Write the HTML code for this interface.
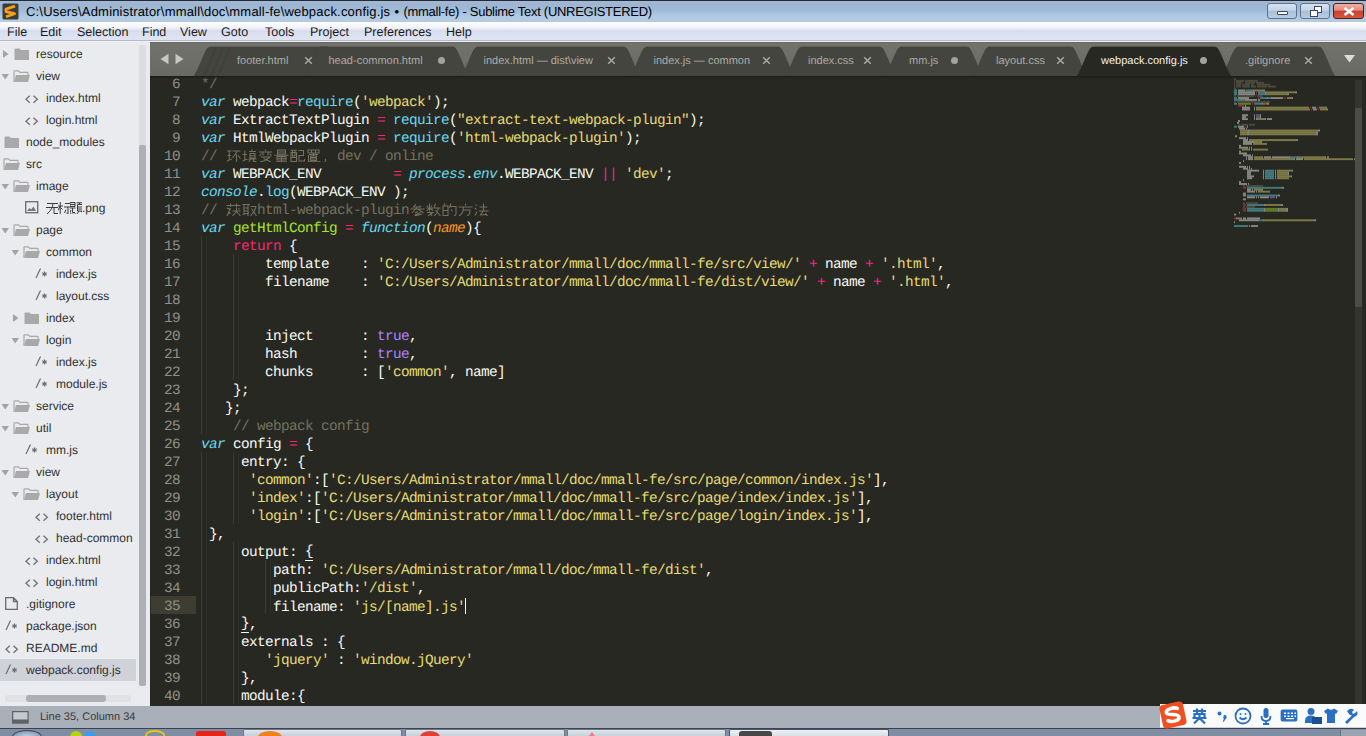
<!DOCTYPE html>
<html><head><meta charset="utf-8">
<style>
*{margin:0;padding:0;box-sizing:border-box}
html,body{width:1366px;height:736px;overflow:hidden;background:#272822;font-family:"Liberation Sans",sans-serif;text-rendering:geometricPrecision}
.abs{position:absolute}
#title{position:absolute;left:0;top:0;width:1366px;height:22px;background:linear-gradient(#a9b9d0 0px,#9db5d2 3px,#9fbad8 9px,#b0cbe7 16px,#b3cbe2 19px,#b9c8d6 21px);border-top:1px solid #1d2b3c}
#title .t{text-rendering:geometricPrecision;position:absolute;left:26px;top:3px;font-size:13px;color:#000;white-space:nowrap}
#menu{position:absolute;left:0;top:22px;width:1366px;height:20px;background:linear-gradient(#fdfdfe 0px,#f4f5fa 5px,#e9ebf5 7px,#d5d9eb 9px,#dce1f1 11px,#dfe4f4 17px,#dfe3f2 18px,#b7b9c6 18px,#b7b9c6 19px,#f0f1f8 19px,#f0f1f8 20px)}
#menu span{text-rendering:geometricPrecision;position:absolute;top:3px;font-size:12.5px;color:#1a1a1a}
#side{position:absolute;left:0;top:42px;width:150px;height:664px;background:#eaebee;overflow:hidden}
#side .it{text-rendering:geometricPrecision;position:absolute;font-size:12px;line-height:20px;color:#303030;white-space:nowrap}
.tab-t{text-rendering:geometricPrecision;position:absolute;top:12px;font-size:11px;line-height:14px;white-space:nowrap}
.cjs{display:inline-block;width:12px;height:11px;margin-right:0;vertical-align:-1px;background:linear-gradient(#555,#555) 1px 1px/10px 1px no-repeat,linear-gradient(#555,#555) 0 5px/12px 1px no-repeat,linear-gradient(#555,#555) 5px 1px/1px 10px no-repeat,linear-gradient(#555,#555) 1px 10px/10px 1px no-repeat;opacity:.8}
#code{position:absolute;left:150px;top:76px;width:1216px;height:628px;background:#272822;overflow:hidden}
.row{position:absolute;left:0;width:1080px;height:18px;font-family:"Liberation Mono",monospace;font-size:14.4px;letter-spacing:-0.6359px;line-height:18px;white-space:pre}
.ln{position:absolute;left:0;width:30px;height:18px;line-height:22px;text-align:right;color:#8f908a}
.ln.hl{background:#3e3d32;left:1px;width:45px;padding-right:16px}
.tx{position:absolute;left:51px;top:2px;color:#f8f8f2}
.g{position:absolute;top:0;width:1px;height:18px;background:#3b3a32}.g2{background:#2f2f29}
.w{color:#f8f8f2}.k{color:#f92672}.s{color:#66d9ef;font-style:italic}.f{color:#a6e22e}.p{color:#fd971f;font-style:italic}
.str{color:#e6db74}.c{color:#75715e}.n{color:#ae81ff}.sp{color:#66d9ef}.spi{color:#66d9ef;font-style:italic}
.u{color:#f8f8f2;display:inline-block;height:17px;border-bottom:1px solid #f8f8f2;vertical-align:top;line-height:17px}
.cur{display:inline-block;width:1px;height:16px;background:#f8f8f0;vertical-align:-3px}
.cj{display:inline-block;width:16px;height:13px;vertical-align:-2px;background:
 linear-gradient(#75715e,#75715e) 2px 1px/12px 1px no-repeat,
 linear-gradient(#75715e,#75715e) 3px 6px/10px 1px no-repeat,
 linear-gradient(#75715e,#75715e) 1px 11px/14px 1px no-repeat,
 linear-gradient(#75715e,#75715e) 7px 1px/1px 11px no-repeat;opacity:.85}
#mm i{position:absolute;height:1.5px;opacity:.45}
#tabbar{position:absolute;left:150px;top:42px;width:1216px;height:34px;background:linear-gradient(#5c5c59 0px,#73736d 1px,#71716b 6px,#6a6a65 34px)}
#status{position:absolute;left:0;top:706px;width:1366px;height:22px;background:#a9b0ba}
#task{position:absolute;left:0;top:728px;width:1366px;height:8px;background:#7f8ea3;border-top:1px solid #3b4352}
</style></head><body>
<div id="title"><svg class="abs" style="left:2px;top:2px" width="17" height="17"><rect x="0.5" y="0.5" width="16" height="16" rx="1.5" fill="#3b3b39"/><path d="M13 3.2 L4 6.2 L4 8.6 L12.6 10.6 L12.6 10.8 L4 13.8" fill="none" stroke="#f7a11b" stroke-width="2.8" stroke-linejoin="round"/></svg>
<div class="abs" style="left:1267px;top:2px;width:30px;height:16px;border:1px solid #5f7188;border-radius:3px;background:linear-gradient(#d6e3f1 0%,#c3d4e8 45%,#a9bfd9 50%,#b8cde4 100%)"><div class="abs" style="left:9px;top:7px;width:11px;height:4px;background:#fff;border:1px solid #3c4656;border-radius:1px"></div></div>
<div class="abs" style="left:1300px;top:2px;width:30px;height:16px;border:1px solid #5f7188;border-radius:3px;background:linear-gradient(#d6e3f1 0%,#c3d4e8 45%,#a9bfd9 50%,#b8cde4 100%)"><div class="abs" style="left:13px;top:2px;width:8px;height:7px;background:#fff;border:1px solid #3c4656"></div><div class="abs" style="left:9px;top:6px;width:8px;height:7px;background:#fff;border:1px solid #3c4656"></div></div>
<div class="abs" style="left:1333px;top:2px;width:31px;height:16px;border:1px solid #4a2020;border-radius:3px;background:linear-gradient(#efb0a0 0%,#e3887a 45%,#c9402e 50%,#d4583e 100%)"><svg class="abs" style="left:9px;top:3px" width="12" height="9"><path d="M1.5 1 L10.5 8 M10.5 1 L1.5 8" stroke="#fff" stroke-width="2.6"/></svg></div>
<div class="t" style="letter-spacing:0.186px">C:\Users\Administrator\mmall\doc\mmall-fe\webpack.config.js</div><div class="t" style="left:394.5px">•</div><div class="t" style="left:403.5px;letter-spacing:-0.288px">(mmall-fe) - Sublime Text (UNREGISTERED)</div></div>
<div id="menu"><span style="left:7px">File</span><span style="left:40px">Edit</span><span style="left:77px">Selection</span><span style="left:142px">Find</span><span style="left:180px">View</span><span style="left:221px">Goto</span><span style="left:265px">Tools</span><span style="left:310px">Project</span><span style="left:364px">Preferences</span><span style="left:446px">Help</span></div>
<div id="side"><div class="abs" style="left:0;top:617px;width:136px;height:22px;background:#cfd2d9"></div>
<svg class="abs" style="left:2px;top:7px" width="8" height="10"><path d="M1 1 L6.5 5 L1 9 Z" fill="#a3a3a3"/></svg>
<svg class="abs" style="left:14px;top:6px" width="16" height="13"><path d="M0.5 1.5 Q0.5 0.5 1.5 0.5 L5.5 0.5 L7 2 L14.5 2 Q15 2 15 2.5 L15 12 L0.5 12 Z" fill="#a9a9a9"/></svg>
<div class="it" style="left:36px;top:2px">resource</div>
<svg class="abs" style="left:1px;top:31px" width="9" height="8"><path d="M0.5 1 L8 1 L4.25 6.5 Z" fill="#a3a3a3"/></svg>
<svg class="abs" style="left:13px;top:28px" width="18" height="13"><path d="M1 12 L1 1.5 Q1 0.8 1.8 0.8 L5.5 0.8 L7 2.3 L14.3 2.3 Q15 2.3 15 3 L15 5" fill="none" stroke="#a9a9a9" stroke-width="1.2"/><path d="M1 12 L3 5 L17 5 L15 12 Z" fill="#a9a9a9"/></svg>
<div class="it" style="left:36px;top:24px">view</div>
<svg class="abs" style="left:25px;top:53px" width="14" height="9"><path d="M4.8 0.8 L1 4.3 L4.8 7.8 M8.5 0.8 L12.3 4.3 L8.5 7.8" fill="none" stroke="#747474" stroke-width="1.4"/></svg>
<div class="it" style="left:46px;top:46px">index.html</div>
<svg class="abs" style="left:25px;top:75px" width="14" height="9"><path d="M4.8 0.8 L1 4.3 L4.8 7.8 M8.5 0.8 L12.3 4.3 L8.5 7.8" fill="none" stroke="#747474" stroke-width="1.4"/></svg>
<div class="it" style="left:46px;top:68px">login.html</div>
<svg class="abs" style="left:4px;top:94px" width="16" height="13"><path d="M0.5 1.5 Q0.5 0.5 1.5 0.5 L5.5 0.5 L7 2 L14.5 2 Q15 2 15 2.5 L15 12 L0.5 12 Z" fill="#a9a9a9"/></svg>
<div class="it" style="left:26px;top:90px">node_modules</div>
<svg class="abs" style="left:3px;top:116px" width="18" height="13"><path d="M1 12 L1 1.5 Q1 0.8 1.8 0.8 L5.5 0.8 L7 2.3 L14.3 2.3 Q15 2.3 15 3 L15 5" fill="none" stroke="#a9a9a9" stroke-width="1.2"/><path d="M1 12 L3 5 L17 5 L15 12 Z" fill="#a9a9a9"/></svg>
<div class="it" style="left:26px;top:112px">src</div>
<svg class="abs" style="left:1px;top:141px" width="9" height="8"><path d="M0.5 1 L8 1 L4.25 6.5 Z" fill="#a3a3a3"/></svg>
<svg class="abs" style="left:13px;top:138px" width="18" height="13"><path d="M1 12 L1 1.5 Q1 0.8 1.8 0.8 L5.5 0.8 L7 2.3 L14.3 2.3 Q15 2.3 15 3 L15 5" fill="none" stroke="#a9a9a9" stroke-width="1.2"/><path d="M1 12 L3 5 L17 5 L15 12 Z" fill="#a9a9a9"/></svg>
<div class="it" style="left:36px;top:134px">image</div>
<svg class="abs" style="left:25px;top:159px" width="14" height="13"><rect x="0.7" y="0.7" width="12" height="11" fill="none" stroke="#6a6a6a" stroke-width="1.3"/><path d="M2 10 L4.5 7 L6 8.5 L8.5 5.5 L11 10 Z" fill="#777"/></svg>
<div class="it" style="left:46px;top:156px"><svg width="12" height="12" style="vertical-align:-2px"><path transform="translate(-1 0)" d="M2 1.5H13M0.5 5.5H14.5M8 1.5Q8 7 1.5 12.5M9 5.5V11.5H14V9.5" fill="none" stroke="#3a3a3a" stroke-width="1.0"/></svg><svg width="12" height="12" style="vertical-align:-2px"><path transform="translate(-1 0)" d="M0.5 4H6M3.2 0V12.5M3.2 4L0.5 9M3.5 5.5L5.5 7.5M8 1.5H14M7 5H14.5M11 5V12L9.5 11M9 7.5L7.5 11M13 7.5L14.5 10.5" fill="none" stroke="#3a3a3a" stroke-width="1.0"/></svg><svg width="12" height="12" style="vertical-align:-2px"><path transform="translate(-1 0)" d="M1 0.5H6V4.5H1ZM1 2.5H6M0.5 6H6.5M3.5 6V10.5H6M2 8L0.5 12Q4 12.5 7 12M7.5 0.8H14.5M11 0.8L10 2.5M8.5 2.5H13.5V9H8.5ZM8.5 5H13.5M8.5 7H13.5M10 9L8 12M12 9L14.5 12" fill="none" stroke="#3a3a3a" stroke-width="1.0"/></svg>.png</div>
<svg class="abs" style="left:1px;top:185px" width="9" height="8"><path d="M0.5 1 L8 1 L4.25 6.5 Z" fill="#a3a3a3"/></svg>
<svg class="abs" style="left:13px;top:182px" width="18" height="13"><path d="M1 12 L1 1.5 Q1 0.8 1.8 0.8 L5.5 0.8 L7 2.3 L14.3 2.3 Q15 2.3 15 3 L15 5" fill="none" stroke="#a9a9a9" stroke-width="1.2"/><path d="M1 12 L3 5 L17 5 L15 12 Z" fill="#a9a9a9"/></svg>
<div class="it" style="left:36px;top:178px">page</div>
<svg class="abs" style="left:11px;top:207px" width="9" height="8"><path d="M0.5 1 L8 1 L4.25 6.5 Z" fill="#a3a3a3"/></svg>
<svg class="abs" style="left:23px;top:204px" width="18" height="13"><path d="M1 12 L1 1.5 Q1 0.8 1.8 0.8 L5.5 0.8 L7 2.3 L14.3 2.3 Q15 2.3 15 3 L15 5" fill="none" stroke="#a9a9a9" stroke-width="1.2"/><path d="M1 12 L3 5 L17 5 L15 12 Z" fill="#a9a9a9"/></svg>
<div class="it" style="left:46px;top:200px">common</div>
<svg class="abs" style="left:35px;top:226px" width="14" height="11"><path d="M1 10 L5.5 0.5" stroke="#6c6c6c" stroke-width="1.2"/><path d="M9.5 3.5 L9.5 8.5 M7.3 4.8 L11.7 7.2 M7.3 7.2 L11.7 4.8" stroke="#6c6c6c" stroke-width="1.2"/></svg>
<div class="it" style="left:56px;top:222px">index.js</div>
<svg class="abs" style="left:35px;top:248px" width="14" height="11"><path d="M1 10 L5.5 0.5" stroke="#6c6c6c" stroke-width="1.2"/><path d="M9.5 3.5 L9.5 8.5 M7.3 4.8 L11.7 7.2 M7.3 7.2 L11.7 4.8" stroke="#6c6c6c" stroke-width="1.2"/></svg>
<div class="it" style="left:56px;top:244px">layout.css</div>
<svg class="abs" style="left:12px;top:271px" width="8" height="10"><path d="M1 1 L6.5 5 L1 9 Z" fill="#a3a3a3"/></svg>
<svg class="abs" style="left:24px;top:270px" width="16" height="13"><path d="M0.5 1.5 Q0.5 0.5 1.5 0.5 L5.5 0.5 L7 2 L14.5 2 Q15 2 15 2.5 L15 12 L0.5 12 Z" fill="#a9a9a9"/></svg>
<div class="it" style="left:46px;top:266px">index</div>
<svg class="abs" style="left:11px;top:295px" width="9" height="8"><path d="M0.5 1 L8 1 L4.25 6.5 Z" fill="#a3a3a3"/></svg>
<svg class="abs" style="left:23px;top:292px" width="18" height="13"><path d="M1 12 L1 1.5 Q1 0.8 1.8 0.8 L5.5 0.8 L7 2.3 L14.3 2.3 Q15 2.3 15 3 L15 5" fill="none" stroke="#a9a9a9" stroke-width="1.2"/><path d="M1 12 L3 5 L17 5 L15 12 Z" fill="#a9a9a9"/></svg>
<div class="it" style="left:46px;top:288px">login</div>
<svg class="abs" style="left:35px;top:314px" width="14" height="11"><path d="M1 10 L5.5 0.5" stroke="#6c6c6c" stroke-width="1.2"/><path d="M9.5 3.5 L9.5 8.5 M7.3 4.8 L11.7 7.2 M7.3 7.2 L11.7 4.8" stroke="#6c6c6c" stroke-width="1.2"/></svg>
<div class="it" style="left:56px;top:310px">index.js</div>
<svg class="abs" style="left:35px;top:336px" width="14" height="11"><path d="M1 10 L5.5 0.5" stroke="#6c6c6c" stroke-width="1.2"/><path d="M9.5 3.5 L9.5 8.5 M7.3 4.8 L11.7 7.2 M7.3 7.2 L11.7 4.8" stroke="#6c6c6c" stroke-width="1.2"/></svg>
<div class="it" style="left:56px;top:332px">module.js</div>
<svg class="abs" style="left:1px;top:361px" width="9" height="8"><path d="M0.5 1 L8 1 L4.25 6.5 Z" fill="#a3a3a3"/></svg>
<svg class="abs" style="left:13px;top:358px" width="18" height="13"><path d="M1 12 L1 1.5 Q1 0.8 1.8 0.8 L5.5 0.8 L7 2.3 L14.3 2.3 Q15 2.3 15 3 L15 5" fill="none" stroke="#a9a9a9" stroke-width="1.2"/><path d="M1 12 L3 5 L17 5 L15 12 Z" fill="#a9a9a9"/></svg>
<div class="it" style="left:36px;top:354px">service</div>
<svg class="abs" style="left:1px;top:383px" width="9" height="8"><path d="M0.5 1 L8 1 L4.25 6.5 Z" fill="#a3a3a3"/></svg>
<svg class="abs" style="left:13px;top:380px" width="18" height="13"><path d="M1 12 L1 1.5 Q1 0.8 1.8 0.8 L5.5 0.8 L7 2.3 L14.3 2.3 Q15 2.3 15 3 L15 5" fill="none" stroke="#a9a9a9" stroke-width="1.2"/><path d="M1 12 L3 5 L17 5 L15 12 Z" fill="#a9a9a9"/></svg>
<div class="it" style="left:36px;top:376px">util</div>
<svg class="abs" style="left:25px;top:402px" width="14" height="11"><path d="M1 10 L5.5 0.5" stroke="#6c6c6c" stroke-width="1.2"/><path d="M9.5 3.5 L9.5 8.5 M7.3 4.8 L11.7 7.2 M7.3 7.2 L11.7 4.8" stroke="#6c6c6c" stroke-width="1.2"/></svg>
<div class="it" style="left:46px;top:398px">mm.js</div>
<svg class="abs" style="left:1px;top:427px" width="9" height="8"><path d="M0.5 1 L8 1 L4.25 6.5 Z" fill="#a3a3a3"/></svg>
<svg class="abs" style="left:13px;top:424px" width="18" height="13"><path d="M1 12 L1 1.5 Q1 0.8 1.8 0.8 L5.5 0.8 L7 2.3 L14.3 2.3 Q15 2.3 15 3 L15 5" fill="none" stroke="#a9a9a9" stroke-width="1.2"/><path d="M1 12 L3 5 L17 5 L15 12 Z" fill="#a9a9a9"/></svg>
<div class="it" style="left:36px;top:420px">view</div>
<svg class="abs" style="left:11px;top:449px" width="9" height="8"><path d="M0.5 1 L8 1 L4.25 6.5 Z" fill="#a3a3a3"/></svg>
<svg class="abs" style="left:23px;top:446px" width="18" height="13"><path d="M1 12 L1 1.5 Q1 0.8 1.8 0.8 L5.5 0.8 L7 2.3 L14.3 2.3 Q15 2.3 15 3 L15 5" fill="none" stroke="#a9a9a9" stroke-width="1.2"/><path d="M1 12 L3 5 L17 5 L15 12 Z" fill="#a9a9a9"/></svg>
<div class="it" style="left:46px;top:442px">layout</div>
<svg class="abs" style="left:35px;top:471px" width="14" height="9"><path d="M4.8 0.8 L1 4.3 L4.8 7.8 M8.5 0.8 L12.3 4.3 L8.5 7.8" fill="none" stroke="#747474" stroke-width="1.4"/></svg>
<div class="it" style="left:56px;top:464px">footer.html</div>
<svg class="abs" style="left:35px;top:493px" width="14" height="9"><path d="M4.8 0.8 L1 4.3 L4.8 7.8 M8.5 0.8 L12.3 4.3 L8.5 7.8" fill="none" stroke="#747474" stroke-width="1.4"/></svg>
<div class="it" style="left:56px;top:486px">head-common</div>
<svg class="abs" style="left:25px;top:515px" width="14" height="9"><path d="M4.8 0.8 L1 4.3 L4.8 7.8 M8.5 0.8 L12.3 4.3 L8.5 7.8" fill="none" stroke="#747474" stroke-width="1.4"/></svg>
<div class="it" style="left:46px;top:508px">index.html</div>
<svg class="abs" style="left:25px;top:537px" width="14" height="9"><path d="M4.8 0.8 L1 4.3 L4.8 7.8 M8.5 0.8 L12.3 4.3 L8.5 7.8" fill="none" stroke="#747474" stroke-width="1.4"/></svg>
<div class="it" style="left:46px;top:530px">login.html</div>
<svg class="abs" style="left:5px;top:555px" width="14" height="13"><path d="M0.7 0.7 L8.5 0.7 L12.3 4.5 L12.3 12.3 L0.7 12.3 Z M8.5 0.7 L8.5 4.5 L12.3 4.5" fill="none" stroke="#6a6a6a" stroke-width="1.3"/></svg>
<div class="it" style="left:26px;top:552px">.gitignore</div>
<svg class="abs" style="left:5px;top:578px" width="14" height="11"><path d="M1 10 L5.5 0.5" stroke="#6c6c6c" stroke-width="1.2"/><path d="M9.5 3.5 L9.5 8.5 M7.3 4.8 L11.7 7.2 M7.3 7.2 L11.7 4.8" stroke="#6c6c6c" stroke-width="1.2"/></svg>
<div class="it" style="left:26px;top:574px">package.json</div>
<svg class="abs" style="left:5px;top:603px" width="14" height="9"><path d="M4.8 0.8 L1 4.3 L4.8 7.8 M8.5 0.8 L12.3 4.3 L8.5 7.8" fill="none" stroke="#747474" stroke-width="1.4"/></svg>
<div class="it" style="left:26px;top:596px">README.md</div>
<svg class="abs" style="left:5px;top:622px" width="14" height="11"><path d="M1 10 L5.5 0.5" stroke="#6c6c6c" stroke-width="1.2"/><path d="M9.5 3.5 L9.5 8.5 M7.3 4.8 L11.7 7.2 M7.3 7.2 L11.7 4.8" stroke="#6c6c6c" stroke-width="1.2"/></svg>
<div class="it" style="left:26px;top:618px">webpack.config.js</div>
<div class="abs" style="left:139px;top:3px;width:7px;height:641px;background:#dcdde1;border-radius:2px"></div>
<div class="abs" style="left:139px;top:103px;width:7px;height:541px;background:#adafb4;border-radius:2px"></div>
<div class="abs" style="left:5px;top:653px;width:126px;height:7px;background:#e0e1e4;border-radius:3px"></div>
<div class="abs" style="left:26px;top:653px;width:80px;height:7px;background:#adafb4;border-radius:3px"></div></div>
<div id="tabbar"><svg class="abs" style="left:0;top:0" width="1216" height="34"><path d="M44 34 C48 30 55 8 58 6 Q59 5 61 5 L176 5 Q178 5 179 6 C182 8 189 30 193 34 Z" fill="#454540" stroke="#42423d" stroke-width="0.8"/><path d="M155 34 C159 30 166 8 169 6 Q170 5 172 5 L302 5 Q304 5 305 6 C308 8 315 30 319 34 Z" fill="#454540" stroke="#42423d" stroke-width="0.8"/><path d="M311.5 34 C315.5 30 322.5 8 325.5 6 Q326.5 5 328.5 5 L473 5 Q475 5 476 6 C479 8 486 30 490 34 Z" fill="#454540" stroke="#42423d" stroke-width="0.8"/><path d="M480.5 34 C484.5 30 491.5 8 494.5 6 Q495.5 5 497.5 5 L627.5 5 Q629.5 5 630.5 6 C633.5 8 640.5 30 644.5 34 Z" fill="#454540" stroke="#42423d" stroke-width="0.8"/><path d="M635.5 34 C639.5 30 646.5 8 649.5 6 Q650.5 5 652.5 5 L729 5 Q731 5 732 6 C735 8 742 30 746 34 Z" fill="#454540" stroke="#42423d" stroke-width="0.8"/><path d="M735 34 C739 30 746 8 749 6 Q750 5 752 5 L816 5 Q818 5 819 6 C822 8 829 30 833 34 Z" fill="#454540" stroke="#42423d" stroke-width="0.8"/><path d="M823 34 C827 30 834 8 837 6 Q838 5 840 5 L920 5 Q922 5 923 6 C926 8 933 30 937 34 Z" fill="#454540" stroke="#42423d" stroke-width="0.8"/><path d="M1072 34 C1076 30 1083 8 1086 6 Q1087 5 1089 5 L1168 5 Q1170 5 1171 6 C1174 8 1181 30 1185 34 Z" fill="#454540" stroke="#42423d" stroke-width="0.8"/><path d="M927 34 C931 30 938 8 941 6 Q942 5 944 5 L1064 5 Q1066 5 1067 6 C1070 8 1077 30 1081 34 Z" fill="#272822" stroke="#272822" stroke-width="0.8"/><path d="M66 6 L54 34 M73 6 L61 34 M80 6 L68 34" stroke="#3d3d39" stroke-width="2.2" opacity=".55"/></svg>
<div class="tab-t" style="left:87px;color:#acaca6">footer.html</div>
<svg class="abs" style="left:153.5px;top:13.5px" width="9" height="9"><path d="M1.2 1.2 L7.8 7.8 M7.8 1.2 L1.2 7.8" stroke="#a9a9a4" stroke-width="1.5"/></svg>
<div class="tab-t" style="left:178.5px;color:#acaca6">head-common.html</div>
<div class="abs" style="left:287.5px;top:14.5px;width:7px;height:7px;border-radius:50%;background:#a3a39e"></div>
<div class="tab-t" style="left:333.5px;color:#acaca6">index.html — dist\view</div>
<svg class="abs" style="left:457.0px;top:13.5px" width="9" height="9"><path d="M1.2 1.2 L7.8 7.8 M7.8 1.2 L1.2 7.8" stroke="#a9a9a4" stroke-width="1.5"/></svg>
<div class="tab-t" style="left:503.5px;color:#acaca6">index.js — common</div>
<svg class="abs" style="left:612.0px;top:13.5px" width="9" height="9"><path d="M1.2 1.2 L7.8 7.8 M7.8 1.2 L1.2 7.8" stroke="#a9a9a4" stroke-width="1.5"/></svg>
<div class="tab-t" style="left:658px;color:#acaca6">index.css</div>
<svg class="abs" style="left:713.0px;top:13.5px" width="9" height="9"><path d="M1.2 1.2 L7.8 7.8 M7.8 1.2 L1.2 7.8" stroke="#a9a9a4" stroke-width="1.5"/></svg>
<div class="tab-t" style="left:759px;color:#acaca6">mm.js</div>
<div class="abs" style="left:800.5px;top:14.5px;width:7px;height:7px;border-radius:50%;background:#a3a39e"></div>
<div class="tab-t" style="left:846px;color:#acaca6">layout.css</div>
<svg class="abs" style="left:905.5px;top:13.5px" width="9" height="9"><path d="M1.2 1.2 L7.8 7.8 M7.8 1.2 L1.2 7.8" stroke="#a9a9a4" stroke-width="1.5"/></svg>
<div class="tab-t" style="left:1095px;color:#acaca6">.gitignore</div>
<svg class="abs" style="left:1153.5px;top:13.5px" width="9" height="9"><path d="M1.2 1.2 L7.8 7.8 M7.8 1.2 L1.2 7.8" stroke="#a9a9a4" stroke-width="1.5"/></svg>
<div class="tab-t" style="left:951px;color:#f2f2f2">webpack.config.js</div>
<div class="abs" style="left:1050.0px;top:14.5px;width:7px;height:7px;border-radius:50%;background:#a3a39e"></div>
<svg class="abs" style="left:10px;top:11px" width="24" height="12"><path d="M0.5 6 L8.5 0.8 L8.5 11.2 Z M23.5 6 L15.5 0.8 L15.5 11.2 Z" fill="#c6c6c2"/></svg>
<svg class="abs" style="left:1194px;top:13px" width="11" height="8"><path d="M0 0 L11 0 L5.5 7.5 Z" fill="#dcdcd8"/></svg></div>
<div id="code">
<div class="row" style="top:-2px"><div class="ln">6</div><div class="tx"><span class="c">*/</span></div></div>
<div class="row" style="top:16px"><div class="ln">7</div><div class="tx"><span class="s">var</span><span class="w"> webpack</span><span class="k">=</span><span class="sp">require</span><span class="w">(</span><span class="str">&#x27;webpack&#x27;</span><span class="w">);</span></div></div>
<div class="row" style="top:34px"><div class="ln">8</div><div class="tx"><span class="s">var</span><span class="w"> ExtractTextPlugin </span><span class="k">=</span><span class="w"> </span><span class="sp">require</span><span class="w">(</span><span class="str">&quot;extract-text-webpack-plugin&quot;</span><span class="w">);</span></div></div>
<div class="row" style="top:52px"><div class="ln">9</div><div class="tx"><span class="s">var</span><span class="w"> HtmlWebpackPlugin </span><span class="k">=</span><span class="w"> </span><span class="sp">require</span><span class="w">(</span><span class="str">&#x27;html-webpack-plugin&#x27;</span><span class="w">);</span></div></div>
<div class="row" style="top:70px"><div class="ln">10</div><div class="tx"><span class="c">// </span><svg width="16" height="13" style="vertical-align:-2px"><path transform="translate(1 0.5)" d="M1 1.5H5.5M1.5 6H5M3.2 1.5V10.5M0.8 11.5L5.8 9.5M6.5 1.5H14.5M11.5 1.5L6.5 8.5M10.5 4.5V12.5M12 6L14.5 9" fill="none" stroke="#75715e" stroke-width="1.05"/></svg><svg width="16" height="13" style="vertical-align:-2px"><path transform="translate(1 0.5)" d="M0.5 5H5M2.8 1V10.5M0.5 11.5L5.5 9.5M10 0V1.5M7 2H14M8 4H13V8.5H8ZM8 6.2H13M6.5 9.5H14.5M9 8.5L7 12.5M11.5 8.5V12H14.5" fill="none" stroke="#75715e" stroke-width="1.05"/></svg><svg width="16" height="13" style="vertical-align:-2px"><path transform="translate(1 0.5)" d="M7.5 0V1.5M1 2.5H14M5 2.5V6M10 2.5V6M3.5 4L1.5 6.5M11.5 4L13.5 6.5M3 7.5H12L7 11L2 12.5M5.5 9L13 12.5" fill="none" stroke="#75715e" stroke-width="1.05"/></svg><svg width="16" height="13" style="vertical-align:-2px"><path transform="translate(1 0.5)" d="M3.5 0.5H11.5V4.5H3.5ZM3.5 2.5H11.5M0.5 5.8H14.5M3 7H12V10.5H3ZM3 8.8H12M7.5 7V12M2 12.2H13" fill="none" stroke="#75715e" stroke-width="1.05"/></svg><svg width="16" height="13" style="vertical-align:-2px"><path transform="translate(1 0.5)" d="M0.5 0.8H7M2.5 0.8V3M5 0.8V3M1 3H6.5V12H1ZM1 8H6.5M2.5 3V6.5H5V3M8.5 1H13.5V6H9V11.5H14.5V9.5" fill="none" stroke="#75715e" stroke-width="1.05"/></svg><svg width="16" height="13" style="vertical-align:-2px"><path transform="translate(1 0.5)" d="M2 0.5H13V3.5H2ZM5.5 0.5V3.5M9.5 0.5V3.5M3 5H12M7.5 4V6M4.5 6.5H10.5V11H4.5ZM4.5 8H10.5M4.5 9.5H10.5M2.5 5.5V12.2H14.5" fill="none" stroke="#75715e" stroke-width="1.05"/></svg><svg width="16" height="13" style="vertical-align:-2px"><path transform="translate(1 0.5)" d="M3 9.5Q4.5 10.5 2.5 12.5" fill="none" stroke="#75715e" stroke-width="1.05"/></svg><span class="c">dev / online</span></div></div>
<div class="row" style="top:88px"><div class="ln">11</div><div class="tx"><span class="s">var</span><span class="w"> WEBPACK_ENV         </span><span class="k">=</span><span class="w"> </span><span class="spi">process</span><span class="w">.</span><span class="spi">env</span><span class="w">.WEBPACK_ENV </span><span class="k">||</span><span class="w"> </span><span class="str">&#x27;dev&#x27;</span><span class="w">;</span></div></div>
<div class="row" style="top:106px"><div class="ln">12</div><div class="tx"><span class="spi">console</span><span class="w">.</span><span class="sp">log</span><span class="w">(WEBPACK_ENV );</span></div></div>
<div class="row" style="top:124px"><div class="ln">13</div><div class="tx"><span class="c">// </span><svg width="16" height="13" style="vertical-align:-2px"><path transform="translate(1 0.5)" d="M0.5 2H14.5M4.5 0V3.5M10.5 0V3.5M1 4.5Q3 6 5 5M4.5 5L1 12.5M2 8.5L4.5 10M6.5 7.5H14.5M10.5 4V8L6.5 12.5M10.5 8L14.5 12.5M12.5 4.5L13.5 6" fill="none" stroke="#75715e" stroke-width="1.05"/></svg><svg width="16" height="13" style="vertical-align:-2px"><path transform="translate(1 0.5)" d="M0.5 1H8M2 1V11M6 1V12.5M2 4.5H6M2 7.5H6M0.5 11L7 9.5M8.5 3H14Q13 8 8.5 12.5M9.5 5L14.5 12.5" fill="none" stroke="#75715e" stroke-width="1.05"/></svg><span class="c">html-webpack-plugin</span><svg width="16" height="13" style="vertical-align:-2px"><path transform="translate(1 0.5)" d="M6 0.5L3.5 3.5H11M9.5 2L11 3.5M0.5 5.5H14.5M7 4L2 9.5M8 5.5L13.5 9.5M8 8L5 9.5M10.5 9L5 11.5M12 10.5L4 12.8" fill="none" stroke="#75715e" stroke-width="1.05"/></svg><svg width="16" height="13" style="vertical-align:-2px"><path transform="translate(1 0.5)" d="M1 2L2 3.5M6 2L5 3.5M0.5 4.5H7M3.5 0V7.5M3.5 4.5L0.5 7.5M3.5 4.5L7 7M1 9H7L2 12.5M3 8L6 12.5M9.5 0L8 4.5H14.5M12.5 4.5Q11.5 10 8 12.5M9.5 6.5L14.5 12.5" fill="none" stroke="#75715e" stroke-width="1.05"/></svg><svg width="16" height="13" style="vertical-align:-2px"><path transform="translate(1 0.5)" d="M3 0L2 2M1 2.5H6V12H1ZM1 7H6M9 0L7.5 4.5M8 3H14V10.5Q14 12 12 12M9 6L10.5 8" fill="none" stroke="#75715e" stroke-width="1.05"/></svg><svg width="16" height="13" style="vertical-align:-2px"><path transform="translate(1 0.5)" d="M7.5 0V2M0.5 3.5H14.5M5.5 3.5Q5.5 10 1 12.5M5.5 6.5H12Q12 12 9 12" fill="none" stroke="#75715e" stroke-width="1.05"/></svg><svg width="16" height="13" style="vertical-align:-2px"><path transform="translate(1 0.5)" d="M1.5 1L3 2.5M0.8 4.5L2.5 6M1 12L3 8M5.5 3.5H13.5M9.5 0V7M5 7.5H14.5M9 8L6.5 11.5L13 11M11.5 9.5L13.5 12.5" fill="none" stroke="#75715e" stroke-width="1.05"/></svg></div></div>
<div class="row" style="top:142px"><div class="ln">14</div><div class="tx"><span class="s">var</span><span class="w"> </span><span class="f">getHtmlConfig</span><span class="w"> </span><span class="k">=</span><span class="w"> </span><span class="s">function</span><span class="w">(</span><span class="p">name</span><span class="w">){</span></div></div>
<div class="row" style="top:160px"><div class="ln">15</div><i class="g" style="left:51px"></i><i class="g g2" style="left:56px"></i><div class="tx"><span class="w">    </span><span class="k">return</span><span class="w"> {</span></div></div>
<div class="row" style="top:178px"><div class="ln">16</div><i class="g" style="left:51px"></i><i class="g g2" style="left:56px"></i><i class="g" style="left:83px"></i><i class="g g2" style="left:88px"></i><div class="tx"><span class="w">        template    : </span><span class="str">&#x27;C:/Users/Administrator/mmall/doc/mmall-fe/src/view/&#x27;</span><span class="w"> </span><span class="k">+</span><span class="w"> name </span><span class="k">+</span><span class="w"> </span><span class="str">&#x27;.html&#x27;</span><span class="w">,</span></div></div>
<div class="row" style="top:196px"><div class="ln">17</div><i class="g" style="left:51px"></i><i class="g g2" style="left:56px"></i><i class="g" style="left:83px"></i><i class="g g2" style="left:88px"></i><div class="tx"><span class="w">        filename    : </span><span class="str">&#x27;C:/Users/Administrator/mmall/doc/mmall-fe/dist/view/&#x27;</span><span class="w"> </span><span class="k">+</span><span class="w"> name </span><span class="k">+</span><span class="w"> </span><span class="str">&#x27;.html&#x27;</span><span class="w">,</span></div></div>
<div class="row" style="top:214px"><div class="ln">18</div><i class="g" style="left:51px"></i><i class="g g2" style="left:56px"></i><i class="g" style="left:83px"></i><i class="g g2" style="left:88px"></i><div class="tx"></div></div>
<div class="row" style="top:232px"><div class="ln">19</div><i class="g" style="left:51px"></i><i class="g g2" style="left:56px"></i><i class="g" style="left:83px"></i><i class="g g2" style="left:88px"></i><div class="tx"></div></div>
<div class="row" style="top:250px"><div class="ln">20</div><i class="g" style="left:51px"></i><i class="g g2" style="left:56px"></i><i class="g" style="left:83px"></i><i class="g g2" style="left:88px"></i><div class="tx"><span class="w">        inject      : </span><span class="n">true</span><span class="w">,</span></div></div>
<div class="row" style="top:268px"><div class="ln">21</div><i class="g" style="left:51px"></i><i class="g g2" style="left:56px"></i><i class="g" style="left:83px"></i><i class="g g2" style="left:88px"></i><div class="tx"><span class="w">        hash        : </span><span class="n">true</span><span class="w">,</span></div></div>
<div class="row" style="top:286px"><div class="ln">22</div><i class="g" style="left:51px"></i><i class="g g2" style="left:56px"></i><i class="g" style="left:83px"></i><i class="g g2" style="left:88px"></i><div class="tx"><span class="w">        chunks      : [</span><span class="str">&#x27;common&#x27;</span><span class="w">, name]</span></div></div>
<div class="row" style="top:304px"><div class="ln">23</div><i class="g" style="left:51px"></i><i class="g g2" style="left:56px"></i><div class="tx"><span class="w">    };</span></div></div>
<div class="row" style="top:322px"><div class="ln">24</div><i class="g" style="left:51px"></i><i class="g g2" style="left:56px"></i><div class="tx"><span class="w">   };</span></div></div>
<div class="row" style="top:340px"><div class="ln">25</div><i class="g" style="left:51px"></i><i class="g g2" style="left:56px"></i><div class="tx"><span class="w">    </span><span class="c">// webpack config</span></div></div>
<div class="row" style="top:358px"><div class="ln">26</div><div class="tx"><span class="s">var</span><span class="w"> config </span><span class="k">=</span><span class="w"> {</span></div></div>
<div class="row" style="top:376px"><div class="ln">27</div><i class="g" style="left:51px"></i><i class="g g2" style="left:56px"></i><i class="g" style="left:83px"></i><i class="g g2" style="left:88px"></i><div class="tx"><span class="w">     entry: {</span></div></div>
<div class="row" style="top:394px"><div class="ln">28</div><i class="g" style="left:51px"></i><i class="g g2" style="left:56px"></i><i class="g" style="left:83px"></i><i class="g g2" style="left:88px"></i><div class="tx"><span class="w">      </span><span class="str">&#x27;common&#x27;</span><span class="w">:[</span><span class="str">&#x27;C:/Users/Administrator/mmall/doc/mmall-fe/src/page/common/index.js&#x27;</span><span class="w">],</span></div></div>
<div class="row" style="top:412px"><div class="ln">29</div><i class="g" style="left:51px"></i><i class="g g2" style="left:56px"></i><i class="g" style="left:83px"></i><i class="g g2" style="left:88px"></i><div class="tx"><span class="w">      </span><span class="str">&#x27;index&#x27;</span><span class="w">:[</span><span class="str">&#x27;C:/Users/Administrator/mmall/doc/mmall-fe/src/page/index/index.js&#x27;</span><span class="w">],</span></div></div>
<div class="row" style="top:430px"><div class="ln">30</div><i class="g" style="left:51px"></i><i class="g g2" style="left:56px"></i><i class="g" style="left:83px"></i><i class="g g2" style="left:88px"></i><div class="tx"><span class="w">      </span><span class="str">&#x27;login&#x27;</span><span class="w">:[</span><span class="str">&#x27;C:/Users/Administrator/mmall/doc/mmall-fe/src/page/login/index.js&#x27;</span><span class="w">],</span></div></div>
<div class="row" style="top:448px"><div class="ln">31</div><i class="g" style="left:51px"></i><i class="g g2" style="left:56px"></i><div class="tx"><span class="w"> },</span></div></div>
<div class="row" style="top:466px"><div class="ln">32</div><i class="g" style="left:51px"></i><i class="g g2" style="left:56px"></i><i class="g" style="left:83px"></i><i class="g g2" style="left:88px"></i><div class="tx"><span class="w">     output: </span><span class="u">{</span></div></div>
<div class="row" style="top:484px"><div class="ln">33</div><i class="g" style="left:51px"></i><i class="g g2" style="left:56px"></i><i class="g" style="left:83px"></i><i class="g g2" style="left:88px"></i><i class="g" style="left:115px"></i><i class="g g2" style="left:120px"></i><div class="tx"><span class="w">         path: </span><span class="str">&#x27;C:/Users/Administrator/mmall/doc/mmall-fe/dist&#x27;</span><span class="w">,</span></div></div>
<div class="row" style="top:502px"><div class="ln">34</div><i class="g" style="left:51px"></i><i class="g g2" style="left:56px"></i><i class="g" style="left:83px"></i><i class="g g2" style="left:88px"></i><i class="g" style="left:115px"></i><i class="g g2" style="left:120px"></i><div class="tx"><span class="w">         publicPath:</span><span class="str">&#x27;/dist&#x27;</span><span class="w">,</span></div></div>
<div class="row" style="top:520px"><div class="ln hl">35</div><i class="g" style="left:51px"></i><i class="g g2" style="left:56px"></i><i class="g" style="left:83px"></i><i class="g g2" style="left:88px"></i><i class="g" style="left:115px"></i><i class="g g2" style="left:120px"></i><div class="tx"><span class="w">         filename: </span><span class="str">&#x27;js/[name].js&#x27;</span><i class="cur"></i></div></div>
<div class="row" style="top:538px"><div class="ln">36</div><i class="g" style="left:51px"></i><i class="g g2" style="left:56px"></i><i class="g" style="left:83px"></i><i class="g g2" style="left:88px"></i><div class="tx"><span class="w">     </span><span class="u">}</span><span class="w">,</span></div></div>
<div class="row" style="top:556px"><div class="ln">37</div><i class="g" style="left:51px"></i><i class="g g2" style="left:56px"></i><i class="g" style="left:83px"></i><i class="g g2" style="left:88px"></i><div class="tx"><span class="w">     externals : {</span></div></div>
<div class="row" style="top:574px"><div class="ln">38</div><i class="g" style="left:51px"></i><i class="g g2" style="left:56px"></i><i class="g" style="left:83px"></i><i class="g g2" style="left:88px"></i><div class="tx"><span class="w">        </span><span class="str">&#x27;jquery&#x27;</span><span class="w"> : </span><span class="str">&#x27;window.jQuery&#x27;</span></div></div>
<div class="row" style="top:592px"><div class="ln">39</div><i class="g" style="left:51px"></i><i class="g g2" style="left:56px"></i><i class="g" style="left:83px"></i><i class="g g2" style="left:88px"></i><div class="tx"><span class="w">     },</span></div></div>
<div class="row" style="top:610px"><div class="ln">40</div><i class="g" style="left:51px"></i><i class="g g2" style="left:56px"></i><i class="g" style="left:83px"></i><i class="g g2" style="left:88px"></i><div class="tx"><span class="w">     module:{</span></div></div>
<div id="mm" style="position:absolute;left:0;top:2px;width:1216px;height:160px;transform:scale(1,0.955);transform-origin:0 0"><i style="left:1084px;top:0.00px;width:2px;background:#75715e"></i><i style="left:1084px;top:2.00px;width:1px;background:#75715e"></i><i style="left:1086px;top:2.00px;width:8px;background:#75715e"></i><i style="left:1095px;top:2.00px;width:13px;background:#75715e"></i><i style="left:1084px;top:4.00px;width:1px;background:#75715e"></i><i style="left:1086px;top:4.00px;width:6px;background:#75715e"></i><i style="left:1095px;top:4.00px;width:10px;background:#75715e"></i><i style="left:1106px;top:4.00px;width:8px;background:#75715e"></i><i style="left:1084px;top:6.00px;width:1px;background:#75715e"></i><i style="left:1086px;top:6.00px;width:5px;background:#75715e"></i><i style="left:1092px;top:6.00px;width:8px;background:#75715e"></i><i style="left:1101px;top:6.00px;width:3px;background:#75715e"></i><i style="left:1107px;top:6.00px;width:13px;background:#75715e"></i><i style="left:1084px;top:8.00px;width:1px;background:#75715e"></i><i style="left:1086px;top:8.00px;width:5px;background:#75715e"></i><i style="left:1092px;top:8.00px;width:8px;background:#75715e"></i><i style="left:1101px;top:8.00px;width:5px;background:#75715e"></i><i style="left:1107px;top:8.00px;width:10px;background:#75715e"></i><i style="left:1118px;top:8.00px;width:8px;background:#75715e"></i><i style="left:1084px;top:10.00px;width:2px;background:#75715e"></i><i style="left:1084px;top:12.00px;width:3px;background:#66d9ef"></i><i style="left:1088px;top:12.00px;width:7px;background:#f8f8f2"></i><i style="left:1095px;top:12.00px;width:1px;background:#f92672"></i><i style="left:1096px;top:12.00px;width:7px;background:#66d9ef"></i><i style="left:1103px;top:12.00px;width:1px;background:#f8f8f2"></i><i style="left:1104px;top:12.00px;width:9px;background:#e6db74"></i><i style="left:1113px;top:12.00px;width:2px;background:#f8f8f2"></i><i style="left:1084px;top:14.00px;width:3px;background:#66d9ef"></i><i style="left:1088px;top:14.00px;width:17px;background:#f8f8f2"></i><i style="left:1106px;top:14.00px;width:1px;background:#f92672"></i><i style="left:1108px;top:14.00px;width:7px;background:#66d9ef"></i><i style="left:1115px;top:14.00px;width:1px;background:#f8f8f2"></i><i style="left:1116px;top:14.00px;width:29px;background:#e6db74"></i><i style="left:1145px;top:14.00px;width:2px;background:#f8f8f2"></i><i style="left:1084px;top:16.00px;width:3px;background:#66d9ef"></i><i style="left:1088px;top:16.00px;width:17px;background:#f8f8f2"></i><i style="left:1106px;top:16.00px;width:1px;background:#f92672"></i><i style="left:1108px;top:16.00px;width:7px;background:#66d9ef"></i><i style="left:1115px;top:16.00px;width:1px;background:#f8f8f2"></i><i style="left:1116px;top:16.00px;width:21px;background:#e6db74"></i><i style="left:1137px;top:16.00px;width:2px;background:#f8f8f2"></i><i style="left:1084px;top:18.00px;width:2px;background:#75715e"></i><i style="left:1087px;top:18.00px;width:14px;background:#75715e"></i><i style="left:1101px;top:18.00px;width:3px;background:#75715e"></i><i style="left:1105px;top:18.00px;width:1px;background:#75715e"></i><i style="left:1107px;top:18.00px;width:6px;background:#75715e"></i><i style="left:1084px;top:20.00px;width:3px;background:#66d9ef"></i><i style="left:1088px;top:20.00px;width:11px;background:#f8f8f2"></i><i style="left:1108px;top:20.00px;width:1px;background:#f92672"></i><i style="left:1110px;top:20.00px;width:7px;background:#66d9ef"></i><i style="left:1117px;top:20.00px;width:1px;background:#f8f8f2"></i><i style="left:1118px;top:20.00px;width:3px;background:#66d9ef"></i><i style="left:1121px;top:20.00px;width:12px;background:#f8f8f2"></i><i style="left:1134px;top:20.00px;width:2px;background:#f92672"></i><i style="left:1137px;top:20.00px;width:5px;background:#e6db74"></i><i style="left:1142px;top:20.00px;width:1px;background:#f8f8f2"></i><i style="left:1084px;top:22.00px;width:7px;background:#66d9ef"></i><i style="left:1091px;top:22.00px;width:1px;background:#f8f8f2"></i><i style="left:1092px;top:22.00px;width:3px;background:#66d9ef"></i><i style="left:1095px;top:22.00px;width:12px;background:#f8f8f2"></i><i style="left:1108px;top:22.00px;width:2px;background:#f8f8f2"></i><i style="left:1084px;top:24.00px;width:2px;background:#75715e"></i><i style="left:1087px;top:24.00px;width:4px;background:#75715e"></i><i style="left:1091px;top:24.00px;width:19px;background:#75715e"></i><i style="left:1110px;top:24.00px;width:10px;background:#75715e"></i><i style="left:1084px;top:26.00px;width:3px;background:#66d9ef"></i><i style="left:1088px;top:26.00px;width:13px;background:#a6e22e"></i><i style="left:1102px;top:26.00px;width:1px;background:#f92672"></i><i style="left:1104px;top:26.00px;width:8px;background:#66d9ef"></i><i style="left:1112px;top:26.00px;width:1px;background:#f8f8f2"></i><i style="left:1113px;top:26.00px;width:4px;background:#fd971f"></i><i style="left:1117px;top:26.00px;width:2px;background:#f8f8f2"></i><i style="left:1088px;top:28.00px;width:6px;background:#f92672"></i><i style="left:1095px;top:28.00px;width:1px;background:#f8f8f2"></i><i style="left:1092px;top:30.00px;width:8px;background:#f8f8f2"></i><i style="left:1104px;top:30.00px;width:1px;background:#f8f8f2"></i><i style="left:1106px;top:30.00px;width:53px;background:#e6db74"></i><i style="left:1160px;top:30.00px;width:1px;background:#f92672"></i><i style="left:1162px;top:30.00px;width:4px;background:#f8f8f2"></i><i style="left:1167px;top:30.00px;width:1px;background:#f92672"></i><i style="left:1169px;top:30.00px;width:7px;background:#e6db74"></i><i style="left:1176px;top:30.00px;width:1px;background:#f8f8f2"></i><i style="left:1092px;top:32.00px;width:8px;background:#f8f8f2"></i><i style="left:1104px;top:32.00px;width:1px;background:#f8f8f2"></i><i style="left:1106px;top:32.00px;width:54px;background:#e6db74"></i><i style="left:1161px;top:32.00px;width:1px;background:#f92672"></i><i style="left:1163px;top:32.00px;width:4px;background:#f8f8f2"></i><i style="left:1168px;top:32.00px;width:1px;background:#f92672"></i><i style="left:1170px;top:32.00px;width:7px;background:#e6db74"></i><i style="left:1177px;top:32.00px;width:1px;background:#f8f8f2"></i><i style="left:1092px;top:38.00px;width:6px;background:#f8f8f2"></i><i style="left:1104px;top:38.00px;width:1px;background:#f8f8f2"></i><i style="left:1106px;top:38.00px;width:4px;background:#ae81ff"></i><i style="left:1110px;top:38.00px;width:1px;background:#f8f8f2"></i><i style="left:1092px;top:40.00px;width:4px;background:#f8f8f2"></i><i style="left:1104px;top:40.00px;width:1px;background:#f8f8f2"></i><i style="left:1106px;top:40.00px;width:4px;background:#ae81ff"></i><i style="left:1110px;top:40.00px;width:1px;background:#f8f8f2"></i><i style="left:1092px;top:42.00px;width:6px;background:#f8f8f2"></i><i style="left:1104px;top:42.00px;width:1px;background:#f8f8f2"></i><i style="left:1106px;top:42.00px;width:1px;background:#f8f8f2"></i><i style="left:1107px;top:42.00px;width:8px;background:#e6db74"></i><i style="left:1115px;top:42.00px;width:1px;background:#f8f8f2"></i><i style="left:1117px;top:42.00px;width:5px;background:#f8f8f2"></i><i style="left:1088px;top:44.00px;width:2px;background:#f8f8f2"></i><i style="left:1087px;top:46.00px;width:2px;background:#f8f8f2"></i><i style="left:1088px;top:48.00px;width:2px;background:#75715e"></i><i style="left:1091px;top:48.00px;width:7px;background:#75715e"></i><i style="left:1099px;top:48.00px;width:6px;background:#75715e"></i><i style="left:1084px;top:50.00px;width:3px;background:#66d9ef"></i><i style="left:1088px;top:50.00px;width:6px;background:#f8f8f2"></i><i style="left:1095px;top:50.00px;width:1px;background:#f92672"></i><i style="left:1097px;top:50.00px;width:1px;background:#f8f8f2"></i><i style="left:1089px;top:52.00px;width:6px;background:#f8f8f2"></i><i style="left:1096px;top:52.00px;width:1px;background:#f8f8f2"></i><i style="left:1090px;top:54.00px;width:8px;background:#e6db74"></i><i style="left:1098px;top:54.00px;width:2px;background:#f8f8f2"></i><i style="left:1100px;top:54.00px;width:68px;background:#e6db74"></i><i style="left:1168px;top:54.00px;width:2px;background:#f8f8f2"></i><i style="left:1090px;top:56.00px;width:7px;background:#e6db74"></i><i style="left:1097px;top:56.00px;width:2px;background:#f8f8f2"></i><i style="left:1099px;top:56.00px;width:67px;background:#e6db74"></i><i style="left:1166px;top:56.00px;width:2px;background:#f8f8f2"></i><i style="left:1090px;top:58.00px;width:7px;background:#e6db74"></i><i style="left:1097px;top:58.00px;width:2px;background:#f8f8f2"></i><i style="left:1099px;top:58.00px;width:67px;background:#e6db74"></i><i style="left:1166px;top:58.00px;width:2px;background:#f8f8f2"></i><i style="left:1085px;top:60.00px;width:2px;background:#f8f8f2"></i><i style="left:1089px;top:62.00px;width:7px;background:#f8f8f2"></i><i style="left:1097px;top:62.00px;width:1px;background:#f8f8f2"></i><i style="left:1093px;top:64.00px;width:5px;background:#f8f8f2"></i><i style="left:1099px;top:64.00px;width:48px;background:#e6db74"></i><i style="left:1147px;top:64.00px;width:1px;background:#f8f8f2"></i><i style="left:1093px;top:66.00px;width:11px;background:#f8f8f2"></i><i style="left:1104px;top:66.00px;width:7px;background:#e6db74"></i><i style="left:1111px;top:66.00px;width:1px;background:#f8f8f2"></i><i style="left:1093px;top:68.00px;width:9px;background:#f8f8f2"></i><i style="left:1103px;top:68.00px;width:14px;background:#e6db74"></i><i style="left:1089px;top:70.00px;width:1px;background:#f8f8f2"></i><i style="left:1090px;top:70.00px;width:1px;background:#f8f8f2"></i><i style="left:1089px;top:72.00px;width:9px;background:#f8f8f2"></i><i style="left:1099px;top:72.00px;width:1px;background:#f8f8f2"></i><i style="left:1101px;top:72.00px;width:1px;background:#f8f8f2"></i><i style="left:1092px;top:74.00px;width:8px;background:#e6db74"></i><i style="left:1101px;top:74.00px;width:1px;background:#f8f8f2"></i><i style="left:1103px;top:74.00px;width:15px;background:#e6db74"></i><i style="left:1089px;top:76.00px;width:2px;background:#f8f8f2"></i><i style="left:1089px;top:78.00px;width:8px;background:#f8f8f2"></i><i style="left:1093px;top:80.00px;width:8px;background:#f8f8f2"></i><i style="left:1102px;top:80.00px;width:1px;background:#f8f8f2"></i><i style="left:1096px;top:82.00px;width:1px;background:#f8f8f2"></i><i style="left:1098px;top:82.00px;width:4px;background:#f8f8f2"></i><i style="left:1102px;top:82.00px;width:1px;background:#f8f8f2"></i><i style="left:1104px;top:82.00px;width:8px;background:#e6db74"></i><i style="left:1112px;top:82.00px;width:1px;background:#f8f8f2"></i><i style="left:1114px;top:82.00px;width:7px;background:#f8f8f2"></i><i style="left:1122px;top:82.00px;width:18px;background:#f8f8f2"></i><i style="left:1140px;top:82.00px;width:7px;background:#66d9ef"></i><i style="left:1147px;top:82.00px;width:1px;background:#f8f8f2"></i><i style="left:1148px;top:82.00px;width:27px;background:#e6db74"></i><i style="left:1175px;top:82.00px;width:1px;background:#f8f8f2"></i><i style="left:1177px;top:82.00px;width:2px;background:#f8f8f2"></i><i style="left:1096px;top:84.00px;width:1px;background:#f8f8f2"></i><i style="left:1098px;top:84.00px;width:4px;background:#f8f8f2"></i><i style="left:1102px;top:84.00px;width:1px;background:#f8f8f2"></i><i style="left:1104px;top:84.00px;width:40px;background:#e6db74"></i><i style="left:1144px;top:84.00px;width:1px;background:#f8f8f2"></i><i style="left:1146px;top:84.00px;width:7px;background:#f8f8f2"></i><i style="left:1154px;top:84.00px;width:49px;background:#e6db74"></i><i style="left:1204px;top:84.00px;width:1px;background:#f8f8f2"></i><i style="left:1093px;top:86.00px;width:1px;background:#f8f8f2"></i><i style="left:1089px;top:88.00px;width:2px;background:#f8f8f2"></i><i style="left:1089px;top:92.00px;width:7px;background:#f8f8f2"></i><i style="left:1097px;top:92.00px;width:1px;background:#f8f8f2"></i><i style="left:1099px;top:92.00px;width:1px;background:#f8f8f2"></i><i style="left:1093px;top:94.00px;width:5px;background:#f8f8f2"></i><i style="left:1099px;top:94.00px;width:1px;background:#f8f8f2"></i><i style="left:1101px;top:94.00px;width:1px;background:#f8f8f2"></i><i style="left:1097px;top:96.00px;width:12px;background:#f8f8f2"></i><i style="left:1113px;top:96.00px;width:1px;background:#f8f8f2"></i><i style="left:1115px;top:96.00px;width:9px;background:#66d9ef"></i><i style="left:1125px;top:96.00px;width:1px;background:#f8f8f2"></i><i style="left:1127px;top:96.00px;width:15px;background:#e6db74"></i><i style="left:1142px;top:96.00px;width:1px;background:#f8f8f2"></i><i style="left:1097px;top:98.00px;width:4px;background:#f8f8f2"></i><i style="left:1113px;top:98.00px;width:1px;background:#f8f8f2"></i><i style="left:1115px;top:98.00px;width:9px;background:#66d9ef"></i><i style="left:1125px;top:98.00px;width:1px;background:#f8f8f2"></i><i style="left:1127px;top:98.00px;width:11px;background:#e6db74"></i><i style="left:1138px;top:98.00px;width:1px;background:#f8f8f2"></i><i style="left:1097px;top:100.00px;width:4px;background:#f8f8f2"></i><i style="left:1113px;top:100.00px;width:1px;background:#f8f8f2"></i><i style="left:1115px;top:100.00px;width:9px;background:#66d9ef"></i><i style="left:1125px;top:100.00px;width:1px;background:#f8f8f2"></i><i style="left:1127px;top:100.00px;width:11px;background:#e6db74"></i><i style="left:1138px;top:100.00px;width:1px;background:#f8f8f2"></i><i style="left:1097px;top:102.00px;width:7px;background:#f8f8f2"></i><i style="left:1113px;top:102.00px;width:1px;background:#f8f8f2"></i><i style="left:1115px;top:102.00px;width:9px;background:#66d9ef"></i><i style="left:1125px;top:102.00px;width:1px;background:#f8f8f2"></i><i style="left:1127px;top:102.00px;width:14px;background:#e6db74"></i><i style="left:1141px;top:102.00px;width:1px;background:#f8f8f2"></i><i style="left:1097px;top:104.00px;width:5px;background:#f8f8f2"></i><i style="left:1113px;top:104.00px;width:1px;background:#f8f8f2"></i><i style="left:1115px;top:104.00px;width:9px;background:#66d9ef"></i><i style="left:1125px;top:104.00px;width:1px;background:#f8f8f2"></i><i style="left:1127px;top:104.00px;width:12px;background:#e6db74"></i><i style="left:1093px;top:106.00px;width:1px;background:#f8f8f2"></i><i style="left:1089px;top:108.00px;width:2px;background:#f8f8f2"></i><i style="left:1089px;top:110.00px;width:8px;background:#f8f8f2"></i><i style="left:1098px;top:110.00px;width:1px;background:#f8f8f2"></i><i style="left:1093px;top:112.00px;width:2px;background:#75715e"></i><i style="left:1096px;top:112.00px;width:17px;background:#75715e"></i><i style="left:1093px;top:114.00px;width:3px;background:#f92672"></i><i style="left:1097px;top:114.00px;width:35px;background:#66d9ef"></i><i style="left:1132px;top:114.00px;width:2px;background:#f8f8f2"></i><i style="left:1097px;top:116.00px;width:4px;background:#f8f8f2"></i><i style="left:1102px;top:116.00px;width:1px;background:#f8f8f2"></i><i style="left:1104px;top:116.00px;width:8px;background:#e6db74"></i><i style="left:1112px;top:116.00px;width:1px;background:#f8f8f2"></i><i style="left:1097px;top:118.00px;width:8px;background:#f8f8f2"></i><i style="left:1106px;top:118.00px;width:1px;background:#f8f8f2"></i><i style="left:1108px;top:118.00px;width:12px;background:#e6db74"></i><i style="left:1093px;top:120.00px;width:3px;background:#f8f8f2"></i><i style="left:1093px;top:122.00px;width:3px;background:#f8f8f2"></i><i style="left:1097px;top:122.00px;width:31px;background:#66d9ef"></i><i style="left:1128px;top:122.00px;width:2px;background:#f8f8f2"></i><i style="left:1097px;top:124.00px;width:8px;background:#f8f8f2"></i><i style="left:1106px;top:124.00px;width:1px;background:#f8f8f2"></i><i style="left:1108px;top:124.00px;width:1px;background:#f8f8f2"></i><i style="left:1110px;top:124.00px;width:9px;background:#f8f8f2"></i><i style="left:1120px;top:124.00px;width:5px;background:#ae81ff"></i><i style="left:1126px;top:124.00px;width:1px;background:#f8f8f2"></i><i style="left:1093px;top:126.00px;width:3px;background:#f8f8f2"></i><i style="left:1093px;top:130.00px;width:2px;background:#75715e"></i><i style="left:1096px;top:130.00px;width:12px;background:#75715e"></i><i style="left:1093px;top:132.00px;width:3px;background:#f92672"></i><i style="left:1097px;top:132.00px;width:17px;background:#66d9ef"></i><i style="left:1114px;top:132.00px;width:1px;background:#f8f8f2"></i><i style="left:1115px;top:132.00px;width:16px;background:#e6db74"></i><i style="left:1131px;top:132.00px;width:2px;background:#f8f8f2"></i><i style="left:1093px;top:134.00px;width:2px;background:#75715e"></i><i style="left:1096px;top:134.00px;width:9px;background:#75715e"></i><i style="left:1093px;top:136.00px;width:3px;background:#f92672"></i><i style="left:1097px;top:136.00px;width:17px;background:#66d9ef"></i><i style="left:1114px;top:136.00px;width:1px;background:#f8f8f2"></i><i style="left:1115px;top:136.00px;width:13px;background:#a6e22e"></i><i style="left:1128px;top:136.00px;width:1px;background:#f8f8f2"></i><i style="left:1129px;top:136.00px;width:7px;background:#e6db74"></i><i style="left:1136px;top:136.00px;width:2px;background:#f8f8f2"></i><i style="left:1093px;top:138.00px;width:3px;background:#f92672"></i><i style="left:1097px;top:138.00px;width:17px;background:#66d9ef"></i><i style="left:1114px;top:138.00px;width:1px;background:#f8f8f2"></i><i style="left:1115px;top:138.00px;width:13px;background:#a6e22e"></i><i style="left:1128px;top:138.00px;width:1px;background:#f8f8f2"></i><i style="left:1129px;top:138.00px;width:7px;background:#e6db74"></i><i style="left:1136px;top:138.00px;width:2px;background:#f8f8f2"></i><i style="left:1089px;top:140.00px;width:1px;background:#f8f8f2"></i><i style="left:1084px;top:142.00px;width:2px;background:#f8f8f2"></i><i style="left:1084px;top:146.00px;width:2px;background:#f92672"></i><i style="left:1086px;top:146.00px;width:1px;background:#f8f8f2"></i><i style="left:1087px;top:146.00px;width:5px;background:#e6db74"></i><i style="left:1093px;top:146.00px;width:3px;background:#f8f8f2"></i><i style="left:1097px;top:146.00px;width:13px;background:#f8f8f2"></i><i style="left:1089px;top:148.00px;width:20px;background:#f8f8f2"></i><i style="left:1109px;top:148.00px;width:4px;background:#66d9ef"></i><i style="left:1113px;top:148.00px;width:1px;background:#f8f8f2"></i><i style="left:1114px;top:148.00px;width:50px;background:#e6db74"></i><i style="left:1164px;top:148.00px;width:2px;background:#f8f8f2"></i><i style="left:1084px;top:150.00px;width:1px;background:#f8f8f2"></i><i style="left:1084px;top:154.00px;width:14px;background:#66d9ef"></i><i style="left:1099px;top:154.00px;width:1px;background:#f8f8f2"></i><i style="left:1101px;top:154.00px;width:7px;background:#f8f8f2"></i></div>
<div class="abs" style="left:0;top:0;width:1216px;height:3px;background:linear-gradient(rgba(20,20,16,.55),rgba(20,20,16,0))"></div>
</div>
<div class="abs" style="left:1355px;top:80px;width:7px;height:626px;background:#35352f"></div>
<div class="abs" style="left:1355px;top:108px;width:7px;height:199px;background:#4d4d47;border-radius:1px"></div>
<div id="status">
<svg class="abs" style="left:12px;top:5px" width="17" height="13"><rect x="0.6" y="0.6" width="15.5" height="11.5" fill="#c4c9d0" stroke="#5d6269" stroke-width="1.2"/><rect x="0.6" y="8.5" width="15.5" height="3.6" fill="#5d6269"/></svg>
<div class="abs" style="text-rendering:geometricPrecision;left:40px;top:5px;font-size:11px;color:#3a3a3a">Line 35, Column 34</div></div>
<div id="task">
<div class="abs" style="left:243px;top:0;width:159px;height:8px;background:linear-gradient(#dfe5ec,#c4ccd6);border:1px solid #6c7786;border-bottom:0;border-radius:2px 2px 0 0"></div>
<div class="abs" style="left:405px;top:0;width:160px;height:8px;background:linear-gradient(#dfe5ec,#c4ccd6);border:1px solid #6c7786;border-bottom:0;border-radius:2px 2px 0 0"></div>
<div class="abs" style="left:567px;top:0;width:159px;height:8px;background:linear-gradient(#dfe5ec,#c4ccd6);border:1px solid #6c7786;border-bottom:0;border-radius:2px 2px 0 0"></div>
<div class="abs" style="left:729px;top:0;width:160px;height:8px;background:linear-gradient(#eef1f5,#d6dce4);border:1px solid #4b5563;border-bottom:0;border-radius:2px 2px 0 0"></div>
<div class="abs" style="left:12px;top:1px;width:30px;height:14px;border-radius:50%;background:radial-gradient(#c6d4e4,#6f86a4);border:1px solid #39485c"></div>
<div class="abs" style="left:70px;top:2px;width:12px;height:12px;border-radius:50%;background:#b8d40e"></div>
<div class="abs" style="left:84px;top:2px;width:12px;height:12px;border-radius:50%;background:#3d9be9"></div>
<div class="abs" style="left:145px;top:1px;width:20px;height:10px;border-radius:50% 50% 0 0;border:2px solid #e6c51a;border-bottom:0"></div>
<div class="abs" style="left:196px;top:2px;width:30px;height:8px;background:#e8241a;border-radius:3px 3px 0 0"></div>
<div class="abs" style="left:258px;top:2px;width:24px;height:12px;border-radius:50%;background:#f0801e"></div>
<div class="abs" style="left:420px;top:2px;width:20px;height:12px;border-radius:50%;background:#e0403a"></div>
<div class="abs" style="left:586px;top:3px;width:12px;height:8px;background:#f07a8a;clip-path:polygon(50% 0,100% 100%,0 100%)"></div>
<div class="abs" style="left:739px;top:2px;width:33px;height:8px;background:#474747;border-radius:3px 3px 0 0"></div>
<div class="abs" style="left:1340px;top:1px;width:26px;height:7px;background:#9aa4b2;border-left:1px solid #6b7584"></div>
</div>
<div class="abs" style="left:1160px;top:704px;width:206px;height:24px;background:#fafbfc;border-bottom:1px solid #cfd3d8"></div>
<svg class="abs" style="left:1158px;top:700px" width="30" height="30"><g transform="rotate(-12 15 15)"><rect x="3" y="3" width="24" height="24" rx="4" fill="#ef4f21"/><path d="M20.5 9.5 C18 7.5 9 7.5 9 11.5 C9 15 20.5 13.5 20.5 18 C20.5 22 12 22 9 19.5" fill="none" stroke="#fff" stroke-width="3.6" stroke-linecap="round"/></g></svg>
<svg class="abs" style="left:1190px;top:707px" width="170" height="18">
<g fill="none" stroke="#2b6fc2" stroke-width="1.8">
<path d="M3 4 H16 M7 1.5 V6.5 M12 1.5 V6.5 M4.5 7 H14.5 V11 H4.5 Z M9.5 7 V11 M2.5 11 H16.5 M9.5 11 L4 16.5 M9.5 11 L15 16.5" stroke-width="2.2"/>
<circle cx="53" cy="9" r="7.5"/><path d="M49.5 10.5 Q53 14 56.5 10.5"/>
<path d="M71.5 9 Q71.5 14 76 14 Q80.5 14 80.5 9 M76 14 V17 M73 17 H79"/>
<rect x="91.5" y="3.5" width="15" height="10" rx="1" fill="#2b6fc2"/>

</g>
<g fill="#2b6fc2">
<circle cx="29.5" cy="6.5" r="2"/><path d="M34 8 Q37 7.5 36.5 11 L33.5 15 L32.8 14.3 Q34.5 12 33.2 10.5 Z"/>
<circle cx="50.5" cy="7" r="1"/><circle cx="55.5" cy="7" r="1"/>
<rect x="73.5" y="1" width="5" height="10" rx="2.5"/>
<circle cx="121" cy="4.5" r="3.5"/><path d="M115 14 Q115 8.5 121 8.5 Q125 8.5 126 11 L122 16 L115 16 Z"/>
<rect x="122" y="10" width="10" height="7" fill="#1d4f90"/>
<path d="M134 4 L138 1.5 Q141 4 144 1.5 L148 4 L146 7 L145 6.5 V16 H137 V6.5 L136 7 Z"/>
<path d="M166 4 Q170 0 173 3 L171 5 L172 7 L174 6 L176 4 Q178 8 173 10 L166 17 L164 15 L171 8.5 Q168 8 166 4 Z" transform="translate(-9,0)"/>
</g>
<g fill="#fff"><rect x="94" y="5.5" width="2" height="1.5"/><rect x="97.5" y="5.5" width="2" height="1.5"/><rect x="101" y="5.5" width="2" height="1.5"/><rect x="104.5" y="5.5" width="1.5" height="1.5"/><rect x="94" y="8.5" width="2" height="1.5"/><rect x="97.5" y="8.5" width="2" height="1.5"/><rect x="101" y="8.5" width="2" height="1.5"/><rect x="104.5" y="8.5" width="1.5" height="1.5"/><rect x="96" y="11" width="8" height="1.2"/></g>
</svg>
</body></html>
